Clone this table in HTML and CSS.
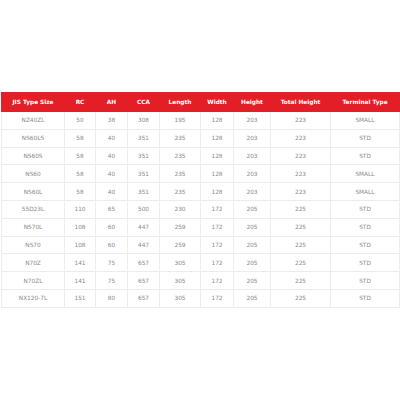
FILE: index.html
```html
<!DOCTYPE html>
<html>
<head>
<meta charset="utf-8">
<link rel="stylesheet" href="styles.css">
</head>
<body>
<div class="page">
<table class="spec">
<colgroup>
<col class="c1"><col class="c2"><col class="c3"><col class="c4"><col class="c5"><col class="c6"><col class="c7"><col class="c8"><col class="c9">
</colgroup>
<thead>
<tr><th>JIS Type Size</th><th>RC</th><th>AH</th><th>CCA</th><th>Length</th><th>Width</th><th>Height</th><th>Total Height</th><th>Terminal Type</th></tr>
</thead>
<tbody>
<tr><td>NZ40ZL</td><td>50</td><td>38</td><td>308</td><td>195</td><td>128</td><td>203</td><td>223</td><td>SMALL</td></tr>
<tr><td>NS60LS</td><td>58</td><td>40</td><td>351</td><td>235</td><td>128</td><td>203</td><td>223</td><td>STD</td></tr>
<tr><td>NS60S</td><td>58</td><td>40</td><td>351</td><td>235</td><td>128</td><td>203</td><td>223</td><td>STD</td></tr>
<tr><td>NS60</td><td>58</td><td>40</td><td>351</td><td>235</td><td>128</td><td>203</td><td>223</td><td>SMALL</td></tr>
<tr><td>NS60L</td><td>58</td><td>40</td><td>351</td><td>235</td><td>128</td><td>203</td><td>223</td><td>SMALL</td></tr>
<tr><td>55D23L</td><td>110</td><td>65</td><td>500</td><td>230</td><td>172</td><td>205</td><td>225</td><td>STD</td></tr>
<tr><td>NS70L</td><td>108</td><td>60</td><td>447</td><td>259</td><td>172</td><td>205</td><td>225</td><td>STD</td></tr>
<tr><td>NS70</td><td>108</td><td>60</td><td>447</td><td>259</td><td>172</td><td>205</td><td>225</td><td>STD</td></tr>
<tr><td>N70Z</td><td>141</td><td>75</td><td>657</td><td>305</td><td>172</td><td>205</td><td>225</td><td>STD</td></tr>
<tr><td>N70ZL</td><td>141</td><td>75</td><td>657</td><td>305</td><td>172</td><td>205</td><td>225</td><td>STD</td></tr>
<tr><td>NX120-7L</td><td>151</td><td>80</td><td>657</td><td>305</td><td>172</td><td>205</td><td>225</td><td>STD</td></tr>
</tbody>
</table>
</div>
</body>
</html>
```
FILE: styles.css
```css
html, body {
  margin: 0;
  padding: 0;
  background: #ffffff;
}
.page {
  padding: 92px 1px 0 1px;
}
.spec {
  width: 398px;
  table-layout: fixed;
  border-collapse: collapse;
  font-family: "DejaVu Sans", "Liberation Sans", sans-serif;
  font-size: 5.8px;
}
.c1 { width: 63px; }
.c2 { width: 31px; }
.c3 { width: 32px; }
.c4 { width: 32px; }
.c5 { width: 41px; }
.c6 { width: 33px; }
.c7 { width: 37px; }
.c8 { width: 60px; }
.c9 { width: 69px; }
.spec th {
  background: #e41e26;
  color: #ffffff;
  font-weight: bold;
  height: 18px;
  padding: 0;
  text-align: center;
  vertical-align: middle;
  border: 1px solid #e41e26;
}
.spec td {
  height: 17.8px;
  padding: 0;
  box-sizing: border-box;
  text-align: center;
  vertical-align: middle;
  color: #8a8a8a;
  border: 1px solid #ececec;
}
```
